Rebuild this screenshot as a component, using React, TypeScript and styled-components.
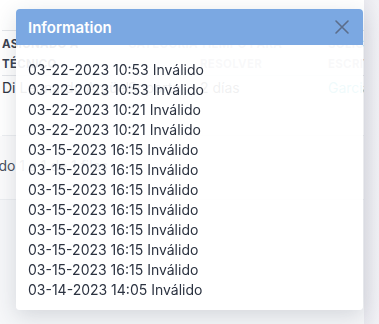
import React from 'react';
import styled, { createGlobalStyle } from 'styled-components';

const GlobalStyle = createGlobalStyle`
  html, body {
    margin: 0;
    padding: 0;
    overflow: hidden;
    background: #f3f4f7;
    font-family: Inter, "Noto Sans", sans-serif;
  }
`;

const Page = styled.div`
  display: flex;
  width: 379px;
  height: 324px;
`;

const Main = styled.div`
  flex: 1;
  display: flex;
  flex-direction: column;
  overflow: hidden;
  background: #f6f7f9;
`;

const ScrollTrack = styled.div`
  width: 15px;
  background: linear-gradient(90deg, #e9e9ef, #f1f1f5);
`;

const Card = styled.div`
  background: #fff;
  padding-top: 30px;
`;

const Table = styled.div`
  display: grid;
  grid-template-columns: 126px 72px 128px 1fr;
  padding-left: 2px;
  white-space: nowrap;
  overflow: hidden;
`;

const HeadCell = styled.div<{ $dark?: boolean }>`
  border-top: 1px solid #e4e6ea;
  border-bottom: 1px solid #e4e6ea;
  height: 46px;
  padding-top: 3px;
  box-sizing: border-box;
  font-size: 11.5px;
  font-weight: 700;
  letter-spacing: 0.3px;
  line-height: 20px;
  color: ${p => (p.$dark ? '#3b4250' : '#9aa1ad')};
  text-transform: uppercase;
  overflow: hidden;
`;

const Cell = styled.div<{ $link?: boolean }>`
  height: 60px;
  padding-top: 2px;
  box-sizing: border-box;
  border-bottom: 1px solid #eceef1;
  font-size: 14px;
  line-height: 20px;
  color: ${p => (p.$link ? '#25b4c4' : '#2f3542')};
  overflow: hidden;
`;

const Footer = styled.div`
  height: 63px;
  background: #fbfbfc;
  border-bottom: 1px solid #eceef1;
  font-size: 14px;
  line-height: 60px;
  color: #4a5160;
  text-indent: -56px;
  white-space: nowrap;
  overflow: hidden;
`;

const Overlay = styled.div`
  position: fixed;
  inset: 0;
  padding: 9px 0 0 16px;
`;

const Modal = styled.div`
  width: 347px;
  border-radius: 4px;
  overflow: hidden;
  box-shadow: 0 6px 22px rgba(40, 48, 70, 0.16);
`;

const ModalHeader = styled.div`
  display: flex;
  align-items: center;
  justify-content: space-between;
  height: 36px;
  padding: 0 12px;
  background: #7ba8e2;
`;

const Title = styled.h5`
  margin: 0;
  font-size: 15px;
  font-weight: 600;
  color: #fff;
`;

const Close = styled.button`
  display: flex;
  padding: 0;
  border: 0;
  background: none;
  color: #5b6d8a;
  margin-right: 1px;
`;

const ModalBody = styled.div`
  background: rgba(255, 255, 255, 0.93);
  padding: 15px 12px 10px;
`;

const Entry = styled.div`
  font-size: 14px;
  line-height: 20px;
  color: #2b3240;
`;

const entries = [
  '03-22-2023 10:53 Inválido',
  '03-22-2023 10:53 Inválido',
  '03-22-2023 10:21 Inválido',
  '03-22-2023 10:21 Inválido',
  '03-15-2023 16:15 Inválido',
  '03-15-2023 16:15 Inválido',
  '03-15-2023 16:15 Inválido',
  '03-15-2023 16:15 Inválido',
  '03-15-2023 16:15 Inválido',
  '03-15-2023 16:15 Inválido',
  '03-15-2023 16:15 Inválido',
  '03-14-2023 14:05 Inválido',
];

export default function App() {
  return (
    <>
      <GlobalStyle />
      <Page>
        <Main>
          <Card>
            <Table>
              <HeadCell $dark>Asignado a<br />Técnico</HeadCell>
              <HeadCell>Categoria</HeadCell>
              <HeadCell>Tiempo para<br />resolver</HeadCell>
              <HeadCell>Solicitante<br />escrito</HeadCell>
              <Cell>Di Leonardo Argüello</Cell>
              <Cell>Soporte</Cell>
              <Cell>2 días</Cell>
              <Cell $link>Garcia</Cell>
            </Table>
            <Footer>Mostrando 1 a 1 de 1 filas</Footer>
          </Card>
        </Main>
        <ScrollTrack />
      </Page>
      <Overlay>
        <Modal>
          <ModalHeader>
            <Title>Information</Title>
            <Close aria-label="Close">
              <svg width="16" height="16" viewBox="0 0 16 16" fill="none" stroke="currentColor" strokeWidth="1.6" strokeLinecap="round">
                <path d="M2 2L14 14M14 2L2 14" />
              </svg>
            </Close>
          </ModalHeader>
          <ModalBody>
            {entries.map((e, i) => (
              <Entry key={i}>{e}</Entry>
            ))}
          </ModalBody>
        </Modal>
      </Overlay>
    </>
  );
}
